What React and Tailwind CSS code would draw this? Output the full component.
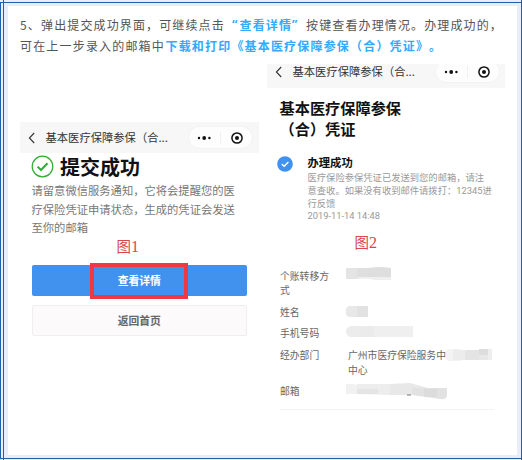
const details = [
    { label: '个账转移方式', height: 'h-[36px]' },
    { label: '姓名', height: 'h-[21.5px]' },
    { label: '手机号码', height: 'h-[22px]' },
    { label: '经办部门', value: '广州市医疗保险服务中中心', height: 'h-[36px]' },
    { label: '邮箱', height: 'h-[25px]' }
];

// Mosaic strokes hiding the personal data of each row
function Mosaic({ label }) {
    switch (label) {
        case '个账转移方式':
            return (
                <svg className="absolute left-[66px] -top-[1.5px] h-[13px] w-[46px]" viewBox="0 0 46 13">
                    <rect y="1" width="12" height="11" rx="1" fill="#e5e4e4" />
                    <rect x="11" y="1" width="12" height="9" fill="#dfdfdf" />
                    <path d="M22 1Q33 -1 45 1V10H22Z" fill="#dedede" />
                    <path d="M12 10H45V13H29Q22 11 12 12Z" fill="#efefef" />
                </svg>
            );
        case '姓名':
            return (
                <div className="absolute left-[66px] top-[1px] flex h-[11px] w-[22px] overflow-hidden rounded-l-sm">
                    <div className="flex-1 bg-[#e8e8e8]" />
                    <div className="flex-1 bg-[#e2e2e2]" />
                </div>
            );
        case '手机号码':
            return (
                <div className="absolute left-[66px] top-0 flex h-[11px] w-[67px] overflow-hidden rounded-l-full">
                    <div className="w-[15px] bg-[#ececec]" />
                    <div className="w-[13px] bg-[#ebebeb]" />
                    <div className="flex-1 bg-[#efefef]" />
                </div>
            );
        case '经办部门':
            return (
                <svg className="absolute left-[165px] top-[0.5px] h-[12px] w-[48px]" viewBox="0 0 48 12">
                    <rect x="1" y="0" width="17" height="12" rx="4" fill="#f3f3f3" />
                    <rect x="8" y="1" width="13" height="10" fill="#ececec" />
                    <path d="M20 1H34V11H20Z" fill="#e4e4e4" />
                    <path d="M34 0H44V6H34Z" fill="#dddddd" />
                    <path d="M34 6H46V11H34Z" fill="#e8e8e8" />
                    <path d="M43 0H47V11H43Z" fill="#eeeeee" />
                </svg>
            );
        default:
            return (
                <svg className="absolute left-[66px] -top-px h-[17px] w-[101px]" viewBox="0 0 101 17">
                    <path d="M0 1Q6 0 11 2V11H0Z" fill="#f1f1f1" />
                    <path d="M11 1L45 1V12L11 11Z" fill="#ededed" />
                    <path d="M11 6H32V11H11Z" fill="#e4e4e4" />
                    <path d="M44 1L64 0L82 5V12H44Z" fill="#e8e8e8" />
                    <path d="M66 5H101V12Q101 17 94 16L66 12Z" fill="#e2e2e2" />
                    <path d="M78 6H91V14H78Z" fill="#dcdcdc" />
                    <path d="M61 12H65" stroke="#777" />
                </svg>
            );
    }
}

function Capsule() {
    return (
        <div className="flex h-[20.5px] w-[63px] items-center rounded-full bg-[#fdfdfd] ring-1 ring-[#f3f3f3]">
            <svg className="h-[20px] w-[63px]" viewBox="0 0 63 20">
                <circle cx="10" cy="10" r="1.2" fill="#111" />
                <circle cx="15.2" cy="10" r="1.9" fill="#111" />
                <circle cx="20.4" cy="10" r="1.2" fill="#111" />
                <path d="M31.5 4V16" stroke="#ececec" strokeWidth="0.8" />
                <circle cx="48" cy="10" r="5.1" fill="none" stroke="#111" strokeWidth="1.5" />
                <circle cx="48" cy="10" r="2" fill="#111" />
            </svg>
        </div>
    );
}

function NavBar({ className }) {
    return (
        <div className={`flex items-center bg-[#f7f7f7] ${className}`}>
            <svg className="ml-[8px] h-[12px] w-[8px]" viewBox="0 0 8 12">
                <path d="M6.2 1L1.4 6L6.2 11" fill="none" stroke="#333" strokeWidth="1.1" />
            </svg>
            <div className="ml-[9.5px] w-[143.5px] whitespace-nowrap text-[11.3px] text-[#333]">
                基本医疗保障参保（合...
            </div>
            <Capsule />
        </div>
    );
}

export default function App() {
    return (
        <div className="grid h-[460px] w-[522px] grid-cols-[1px_2px_1px_517px_1px] grid-rows-[2px_1px_455px_1px_1px] bg-[#e7eef9] font-['Noto_Sans_CJK_SC',sans-serif] [text-spacing-trim:space-all]">
            {/* Double ruled frame */}
            <div className="col-start-1 row-span-3 row-start-2 bg-[#1f60ae]" />
            <div className="col-start-3 row-span-5 row-start-1 bg-[#1f60ae]" />
            <div className="col-span-5 col-start-1 row-start-2 bg-[#1f60ae]" />
            <div className="col-span-5 col-start-1 row-start-4 bg-[#1f60ae]" />
            <div className="col-start-5 row-span-5 row-start-1 bg-[#1f60ae]" />

            <div className="col-start-4 row-start-3 mb-[3px] ml-[4px] mr-[4px] mt-[3px] bg-white">
                <div className="h-[58px] pl-[12px] pt-[7.5px] text-[12px] leading-[21px] tracking-[1.13px] text-[#555]">
                    <div className="flex whitespace-nowrap">
                        <span className="w-[21px]">5、</span>
                        <span className="w-[191px]">弹出提交成功界面，可继续点击</span>
                        <span className="flex w-[74px] font-bold text-[#33aaff]">
                            <span className="w-[7.5px] font-['Noto_Sans']">“</span>查看详情<span className="font-['Noto_Sans']">”</span>
                        </span>
                        <span>按键查看办理情况。办理成功的，</span>
                    </div>
                    <div className="flex whitespace-nowrap tracking-[1.18px]">
                        <span className="w-[145.5px]">可在上一步录入的邮箱中</span>
                        <span className="font-bold text-[#33aaff]">下载和打印《基本医疗保障参保（合）凭证》。</span>
                    </div>
                </div>

                <div className="flex items-start gap-[8px] pl-[12px]">
                    {/* Submit result */}
                    <div className="mt-[58px] w-[239px]">
                        <NavBar className="h-[31px]" />
                        <div className="flex h-[27px] items-center pl-[11px]">
                            <svg className="h-[23px] w-[23px]" viewBox="0 0 23 23">
                                <circle cx="11.5" cy="11.5" r="10.3" fill="none" stroke="#2fae33" strokeWidth="1.2" />
                                <path d="M6.6 11.6L10 15L16.5 8.3" fill="none" stroke="#2fae33" strokeWidth="2" />
                            </svg>
                            <div className="ml-[6px] text-[20px] font-bold leading-[26px] text-[#111]">提交成功</div>
                        </div>
                        <p className="ml-[11.5px] mt-[1px] whitespace-nowrap text-[11.3px] leading-[18.5px] text-[#777]">
                            请留意微信服务通知，它将会提醒您的医
                            <br />
                            疗保险凭证申请状态，生成的凭证会发送
                            <br />
                            至你的邮箱
                        </p>
                        <div className="ml-[96.5px] mt-px h-[27.5px] text-[14.5px] leading-[16px] text-[#d9464b]">
                            图<span className="font-['Liberation_Serif'] text-[16px]">1</span>
                        </div>
                        <div className="relative ml-[12px] flex h-[30.5px] w-[214.5px] items-center justify-center rounded-[2px] bg-[#4191ee] text-[10.8px] font-bold text-white">
                            查看详情
                            <div className="absolute -top-[2px] left-[58px] h-[36px] w-[98px] border-4 border-[#ef3840]" />
                        </div>
                        <div className="ml-[12px] mt-[9.5px] flex h-[30.5px] w-[214.5px] items-center justify-center rounded-[2px] border border-[#f0eeee] bg-[#fcfafb] text-[10.8px] font-bold text-[#666]">
                            返回首页
                        </div>
                    </div>

                    {/* Certificate details */}
                    <div className="w-[238px]">
                        <NavBar className="h-[23.5px] overflow-hidden pb-[8.5px]" />
                        <h1 className="ml-[12.5px] mt-[9px] text-[15.2px] font-bold leading-[21.5px] text-[#111]">
                            基本医疗保障参保
                            <br />
                            （合）凭证
                        </h1>
                        <div className="mt-[15px] flex pl-[10px]">
                            <svg className="mt-px h-[16px] w-[16px]" viewBox="0 0 16 16">
                                <circle cx="8" cy="8" r="7.8" fill="#4191ee" />
                                <path d="M4.8 8L7.2 10.3L11.4 6" fill="none" stroke="#fff" strokeWidth="1.4" />
                            </svg>
                            <div className="ml-[14.5px] whitespace-nowrap text-[9.3px] leading-[12.7px] text-[#999]">
                                <div className="h-[16.5px] text-[11.3px] font-bold leading-[15px] text-[#111]">办理成功</div>
                                医疗保险参保凭证已发送到您的邮箱，请注
                                <br />
                                意查收。如果没有收到邮件请拨打：
                                <span className="font-[Roboto]">12345</span>进
                                <br />
                                行反馈
                                <div className="font-[Roboto] text-[9.3px]">2019-11-14 14:48</div>
                            </div>
                        </div>
                        <div className="ml-[87.5px] mt-[11.5px] h-[34.5px] text-[14.5px] leading-[16px] text-[#d9464b]">
                            图<span className="font-['Liberation_Serif'] text-[16px]">2</span>
                        </div>
                        <div className="ml-[13px] w-[214px] border-b border-[#f3f3f3] text-[9.8px] leading-[14.3px] text-[#666]">
                            {details.map((row) => (
                                <div key={row.label} className={`relative flex ${row.height}`}>
                                    <div className="w-[50px] shrink-0">{row.label}</div>
                                    <div className="ml-[18px] w-[103px]">{row.value}</div>
                                    <Mosaic label={row.label} />
                                </div>
                            ))}
                        </div>
                    </div>
                </div>
            </div>
        </div>
    );
}
